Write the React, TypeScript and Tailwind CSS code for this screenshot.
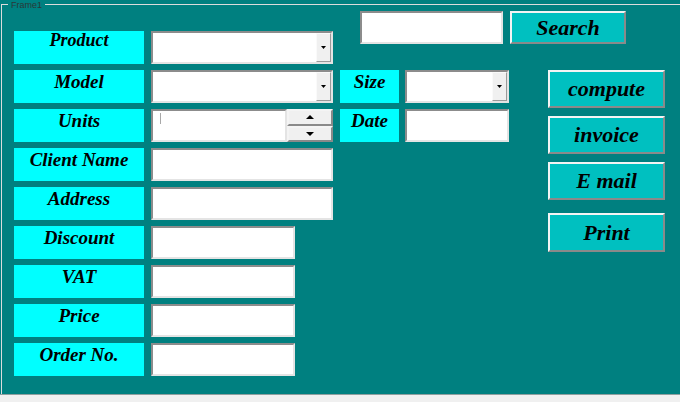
import React from "react";

const serif = "font-['Liberation_Serif','Times_New_Roman',serif] font-bold italic text-black";
const sunken =
  "bg-white border-2 border-t-[#8c8c8c] border-l-[#8c8c8c] border-r-[#e4e4e4] border-b-[#e4e4e4]";
const raised =
  "border-2 border-t-[#f4f4f4] border-l-[#f4f4f4] border-r-[#8a8a8a] border-b-[#8a8a8a]";

function Label({
  text,
  width = "w-[130px]",
  size = "text-[19px] pt-[2px]",
}: {
  text: string;
  width?: string;
  size?: string;
}) {
  return (
    <div className={`${width} h-[33px] shrink-0 bg-[#00ffff] text-center leading-none whitespace-nowrap ${size} ${serif}`}>
      {text}
    </div>
  );
}

function Arrow({ up = false, w = 5, h = 3 }: { up?: boolean; w?: number; h?: number }) {
  return (
    <svg width={w} height={h} viewBox={`0 0 ${w} ${h}`}>
      <polygon points={up ? `0,${h} ${w},${h} ${w / 2},0` : `0,0 ${w},0 ${w / 2},${h}`} fill="#000" />
    </svg>
  );
}

function Combo({ width }: { width: string }) {
  return (
    <div className={`${width} h-[33px] ${sunken} flex justify-end`}>
      <div className="w-[15px] h-full bg-[#f0f0f0] border border-t-[#fafafa] border-l-[#fafafa] border-r-[#9a9a9a] border-b-[#9a9a9a] flex items-center justify-center">
        <Arrow />
      </div>
    </div>
  );
}

function Field({ width }: { width: string }) {
  return <div className={`${width} h-[33px] ${sunken}`} />;
}

function Button({ text, height = "h-[38px]", width = "w-[117px]" }: { text: string; height?: string; width?: string }) {
  return (
    <button
      className={`${width} ${height} bg-[#00c0c0] ${raised} flex items-center justify-center text-[22px] leading-none ${serif}`}
    >
      {text}
    </button>
  );
}

export default function App() {
  return (
    <div className="w-[680px] h-[402px] bg-[#f0f0f0] overflow-hidden flex flex-col">
      {/* Frame */}
      <div className="h-[395px] shrink-0 bg-[#008080] border-b border-[#8f9f9f] pt-[4px] pl-[1px]">
        <div className="relative h-full border-t border-l border-[#dcdcdc] pl-[12px] pt-[6px] flex gap-[7px]">
          <span className="absolute -top-[4px] left-[6px] px-[3px] bg-[#008080] text-[9px] leading-none text-[#2a3838] font-['Liberation_Sans',Arial,sans-serif]">
            Frame1
          </span>

          {/* Left form */}
          <div className="mt-[20px] flex flex-col gap-[6px]">
            <div className="flex gap-[7px]">
              <Label text="Product" size="text-[18px] pt-0" />
              <Combo width="w-[182px]" />
            </div>
            <div className="flex gap-[7px]">
              <Label text="Model" />
              <Combo width="w-[182px]" />
            </div>
            <div className="flex gap-[7px]">
              <Label text="Units" />
              <div className="flex">
                <div className={`w-[136px] h-[33px] ${sunken} pl-[7px] pt-[2px]`}>
                  <div className="w-px h-[11px] bg-[#a8a8a8]" />
                </div>
                <div className="w-[46px] h-[33px] flex flex-col">
                  <div className={`flex-1 bg-[#f0f0f0] ${raised} flex items-center justify-center`}>
                    <Arrow up w={8} h={4} />
                  </div>
                  <div className={`flex-1 bg-[#f0f0f0] ${raised} flex items-center justify-center`}>
                    <Arrow w={8} h={4} />
                  </div>
                </div>
              </div>
            </div>
            <div className="flex gap-[7px]">
              <Label text="Client Name" />
              <Field width="w-[182px]" />
            </div>
            <div className="flex gap-[7px]">
              <Label text="Address" />
              <Field width="w-[182px]" />
            </div>
            <div className="flex gap-[7px]">
              <Label text="Discount" />
              <Field width="w-[144px]" />
            </div>
            <div className="flex gap-[7px]">
              <Label text="VAT" />
              <Field width="w-[144px]" />
            </div>
            <div className="flex gap-[7px]">
              <Label text="Price" />
              <Field width="w-[144px]" />
            </div>
            <div className="flex gap-[7px]">
              <Label text="Order No." />
              <Field width="w-[144px]" />
            </div>
          </div>

          {/* Right side */}
          <div className="flex flex-col">
            <div className="ml-[20px] flex gap-[7px]">
              <Field width="w-[143px]" />
              <Button text="Search" height="h-[33px]" width="w-[116px]" />
            </div>
            <div className="mt-[26px] flex">
              <div className="flex flex-col gap-[6px]">
                <div className="flex gap-[6px]">
                  <Label text="Size" width="w-[59px]" />
                  <Combo width="w-[104px]" />
                </div>
                <div className="flex gap-[6px]">
                  <Label text="Date" width="w-[59px]" />
                  <Field width="w-[104px]" />
                </div>
              </div>
              <div className="ml-[39px] flex flex-col">
                <Button text="compute" />
                <div className="mt-[8px]">
                  <Button text="invoice" />
                </div>
                <div className="mt-[8px]">
                  <Button text="E mail" />
                </div>
                <div className="mt-[13px]">
                  <Button text="Print" height="h-[39px]" />
                </div>
              </div>
            </div>
          </div>
        </div>
      </div>
    </div>
  );
}
